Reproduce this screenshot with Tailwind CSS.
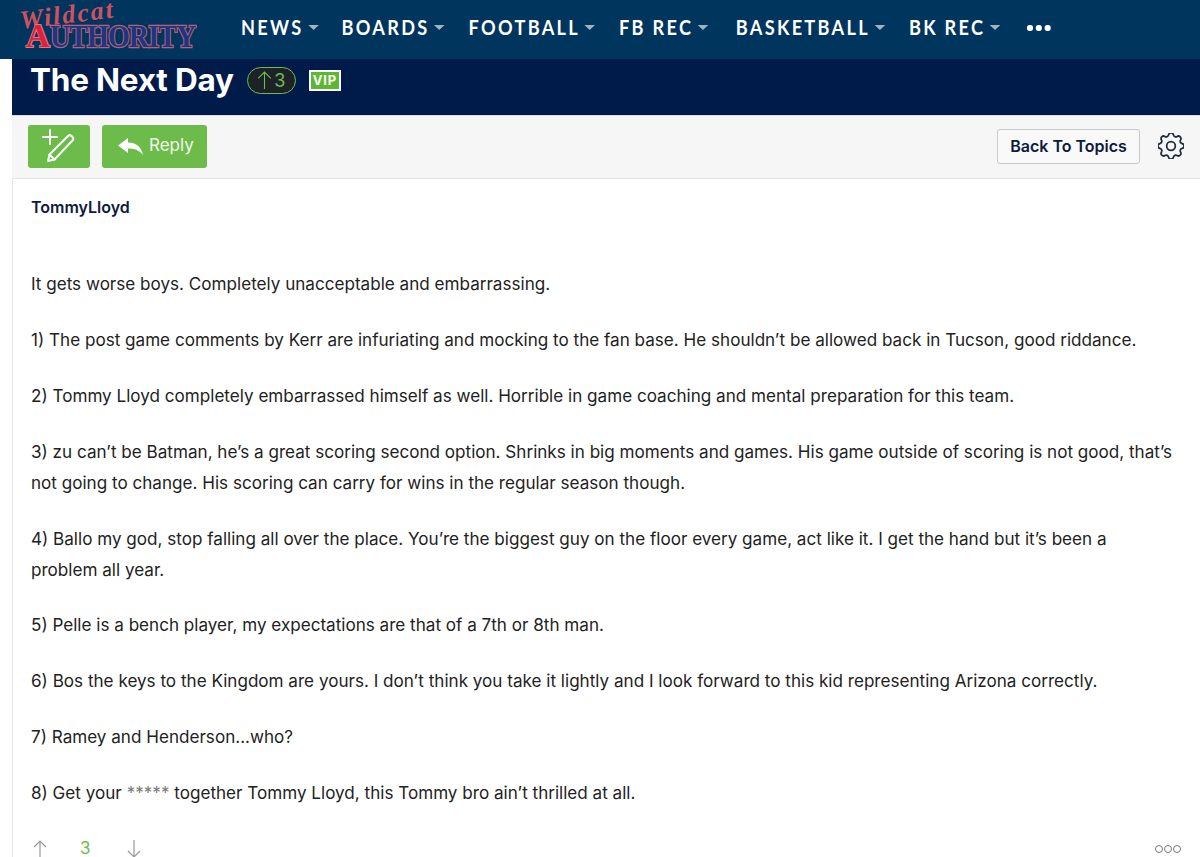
<!doctype html>
<html>
<head>
<meta charset="utf-8">
<script src="https://cdn.jsdelivr.net/npm/@tailwindcss/browser@4"></script>
</head>
<body class="bg-white font-['Inter','Noto_Sans',sans-serif] overflow-hidden">
<div class="w-[1200px] h-[857px] overflow-hidden flex flex-col">
  <header class="h-[59px] shrink-0 bg-[#00355e] flex items-center pb-[3px]">
    <div class="relative w-[241px] h-[56px] shrink-0">
      <span class="absolute left-[20px] top-[8px] font-['Liberation_Serif',serif] italic font-bold text-[26px] leading-[26px] tracking-[2px] text-[#cf5060] -rotate-[7deg] origin-left">Wildcat</span>
      <span class="absolute left-[26px] top-[23px] font-['Liberation_Serif',serif] font-bold text-[33px] leading-[26px] text-[#e02038] [-webkit-text-stroke:2px_#d97a88] [paint-order:stroke_fill]">A</span>
      <span class="absolute left-[50px] top-[24px] font-['Liberation_Serif',serif] font-bold text-[28px] leading-[26px] tracking-[-0.9px] text-[#1e3580] [-webkit-text-stroke:2px_#b8607a] [paint-order:stroke_fill] [transform:scaleY(1.15)]">UTHORITY</span>
    </div>
    <nav class="flex items-center text-white font-bold text-[20.500px] tracking-[2.6px] font-['Lato',sans-serif] leading-none origin-left [transform:scaleX(0.885)] mb-[2px]">
      <a class="flex items-center">NEWS<span class="ml-[5px] mr-[26px] w-0 h-0 border-x-[6px] border-x-transparent border-t-[5px] border-t-[#9fb3c6]"></span></a>
      <a class="flex items-center">BOARDS<span class="ml-[5px] mr-[27px] w-0 h-0 border-x-[6px] border-x-transparent border-t-[5px] border-t-[#9fb3c6]"></span></a>
      <a class="flex items-center">FOOTBALL<span class="ml-[5px] mr-[27px] w-0 h-0 border-x-[6px] border-x-transparent border-t-[5px] border-t-[#9fb3c6]"></span></a>
      <a class="flex items-center">FB REC<span class="ml-[5px] mr-[31px] w-0 h-0 border-x-[6px] border-x-transparent border-t-[5px] border-t-[#9fb3c6]"></span></a>
      <a class="flex items-center">BASKETBALL<span class="ml-[5px] mr-[27px] w-0 h-0 border-x-[6px] border-x-transparent border-t-[5px] border-t-[#9fb3c6]"></span></a>
      <a class="flex items-center">BK REC<span class="ml-[5px] mr-[30px] w-0 h-0 border-x-[6px] border-x-transparent border-t-[5px] border-t-[#9fb3c6]"></span></a>
      <span class="flex gap-[3px] mt-[2px]"><i class="w-[7px] h-[6px] rounded-full bg-white"></i><i class="w-[7px] h-[6px] rounded-full bg-white"></i><i class="w-[7px] h-[6px] rounded-full bg-white"></i></span>
    </nav>
  </header>
  <main class="ml-3 flex-1 flex flex-col min-h-0">
    <section class="h-[56px] shrink-0 bg-[#001a4a] flex items-start pl-[18px]">
      <h1 class="text-white font-['Inter',sans-serif] font-bold text-[31.500px] leading-[41px] tracking-[-0.2px]">The Next Day</h1>
      <span class="ml-[13px] mt-[8px] w-[49px] h-[27px] rounded-full border border-[#6cc04a] bg-[#1d2229] flex items-center justify-center gap-[2px] text-[#6cc04a] text-[18px] leading-none">
        <svg class="w-[15px] h-[19px]" viewBox="0 0 14 18" fill="none" stroke="#6cc04a" stroke-width="1"><path d="M7 17V1M1 7l6-6 6 6"/></svg>3
      </span>
      <span class="ml-[13px] mt-[11px] w-[32px] h-[21px] border-2 border-white bg-[#5cb82e] text-white font-bold text-[13px] tracking-[0.8px] leading-none flex items-center justify-center">VIP</span>
    </section>
    <section class="h-[64px] shrink-0 bg-[#f6f6f6] border-t border-[#d8dee6] border-b border-b-[#e4e4e4] flex items-center pl-[16px] pr-[16px] pb-[2px]">
      <button class="w-[62px] h-[43px] rounded-[3px] bg-[#6dbb4a] flex items-center justify-center">
        <svg class="w-[34px] h-[34px]" viewBox="0 0 34 34" fill="none" stroke="white" stroke-width="2" stroke-linejoin="round" stroke-linecap="round"><path d="M1 8h14M8 1v14"/><path d="M6 32l1.500-6.500L26 7a2.500 2.500 0 0 1 3.500 0l1 1a2.500 2.500 0 0 1 0 3.500L12.500 30.500z"/><path d="M7.500 25.500l5 5"/></svg>
      </button>
      <button class="ml-[12px] w-[105px] h-[43px] rounded-[3px] bg-[#6dbb4a] flex items-center pl-[16px] text-white/90 text-[17px] font-['Inter',sans-serif]">
        <svg class="w-[25px] h-[17px] mr-[6px]" viewBox="0 0 25 17" fill="white"><path d="M0 7.500L10 0v4.500c8 0 13 4 15 12.500-3.500-4.500-8-6.500-15-6.500V15z"/></svg>Reply
      </button>
      <button class="ml-auto w-[143px] h-[35px] bg-[#f9f9f9] rounded-[3px] border border-[#c6cacd] text-[#0e1a3c] font-['Inter',sans-serif] font-semibold text-[16px] flex items-center justify-center">Back To Topics</button>
      <svg class="ml-[18px] w-[26px] h-[26px]" viewBox="3 3 18 18" fill="none" stroke="#1d2c3c" stroke-width="1.200" stroke-linecap="round" stroke-linejoin="round"><path d="M10.325 4.317c.426-1.756 2.924-1.756 3.35 0a1.724 1.724 0 0 0 2.573 1.066c1.543-.940 3.310.826 2.370 2.370a1.724 1.724 0 0 0 1.065 2.572c1.756.426 1.756 2.924 0 3.350a1.724 1.724 0 0 0-1.066 2.573c.940 1.543-.826 3.310-2.370 2.370a1.724 1.724 0 0 0-2.572 1.065c-.426 1.756-2.924 1.756-3.350 0a1.724 1.724 0 0 0-2.573-1.066c-1.543.940-3.310-.826-2.370-2.370a1.724 1.724 0 0 0-1.065-2.572c-1.756-.426-1.756-2.924 0-3.350a1.724 1.724 0 0 0 1.066-2.573c-.940-1.543.826-3.310 2.370-2.370 1 .608 2.296.070 2.572-1.065z"/><circle cx="12" cy="12" r="3"/></svg>
    </section>
    <article class="flex-1 min-h-0 border-l border-[#e4e4e4] pl-[18px] relative text-[#222]">
      <div class="pt-[17px] text-[#0e1a3c] font-semibold text-[16px] leading-[22px]">TommyLloyd</div>
      <div class="mt-[50px] text-[17.100px] leading-[31px] font-['Inter',sans-serif] flex flex-col gap-[24.900px] pr-[24px]">
        <p>It gets worse boys. Completely unacceptable and embarrassing.</p>
        <p>1) The post game comments by Kerr are infuriating and mocking to the fan base. He shouldn’t be allowed back in Tucson, good riddance.</p>
        <p>2) Tommy Lloyd completely embarrassed himself as well. Horrible in game coaching and mental preparation for this team.</p>
        <p>3) zu can’t be Batman, he’s a great scoring second option. Shrinks in big moments and games. His game outside of scoring is not good, that’s not going to change. His scoring can carry for wins in the regular season though.</p>
        <p>4) Ballo my god, stop falling all over the place. You’re the biggest guy on the floor every game, act like it. I get the hand but it’s been a problem all year.</p>
        <p>5) Pelle is a bench player, my expectations are that of a 7th or 8th man.</p>
        <p>6) Bos the keys to the Kingdom are yours. I don’t think you take it lightly and I look forward to this kid representing Arizona correctly.</p>
        <p>7) Ramey and Henderson...who?</p>
        <p>8) Get your <span class="text-[#777]">*****</span> together Tommy Lloyd, this Tommy bro ain’t thrilled at all.</p>
      </div>
      <div class="mt-[29px] flex items-center h-[24px] text-[#6cc04a] text-[17px]">
        <svg class="ml-[2px] w-[14px] h-[18px]" viewBox="0 0 14 18" fill="none" stroke="#9a9a9a" stroke-width="1.200"><path d="M7 18V1M1 7l6-6 6 6"/></svg>
        <span class="ml-[33px]">3</span>
        <svg class="ml-[36px] w-[14px] h-[18px]" viewBox="0 0 14 18" fill="none" stroke="#9a9a9a" stroke-width="1.200"><path d="M7 0v17M1 11l6 6 6-6"/></svg>
        <span class="ml-auto mr-[19px] flex gap-[1px]"><i class="w-[8px] h-[8px] rounded-full border border-[#777]"></i><i class="w-[8px] h-[8px] rounded-full border border-[#777]"></i><i class="w-[8px] h-[8px] rounded-full border border-[#777]"></i></span>
      </div>
    </article>
  </main>
</div>
</body>
</html>
